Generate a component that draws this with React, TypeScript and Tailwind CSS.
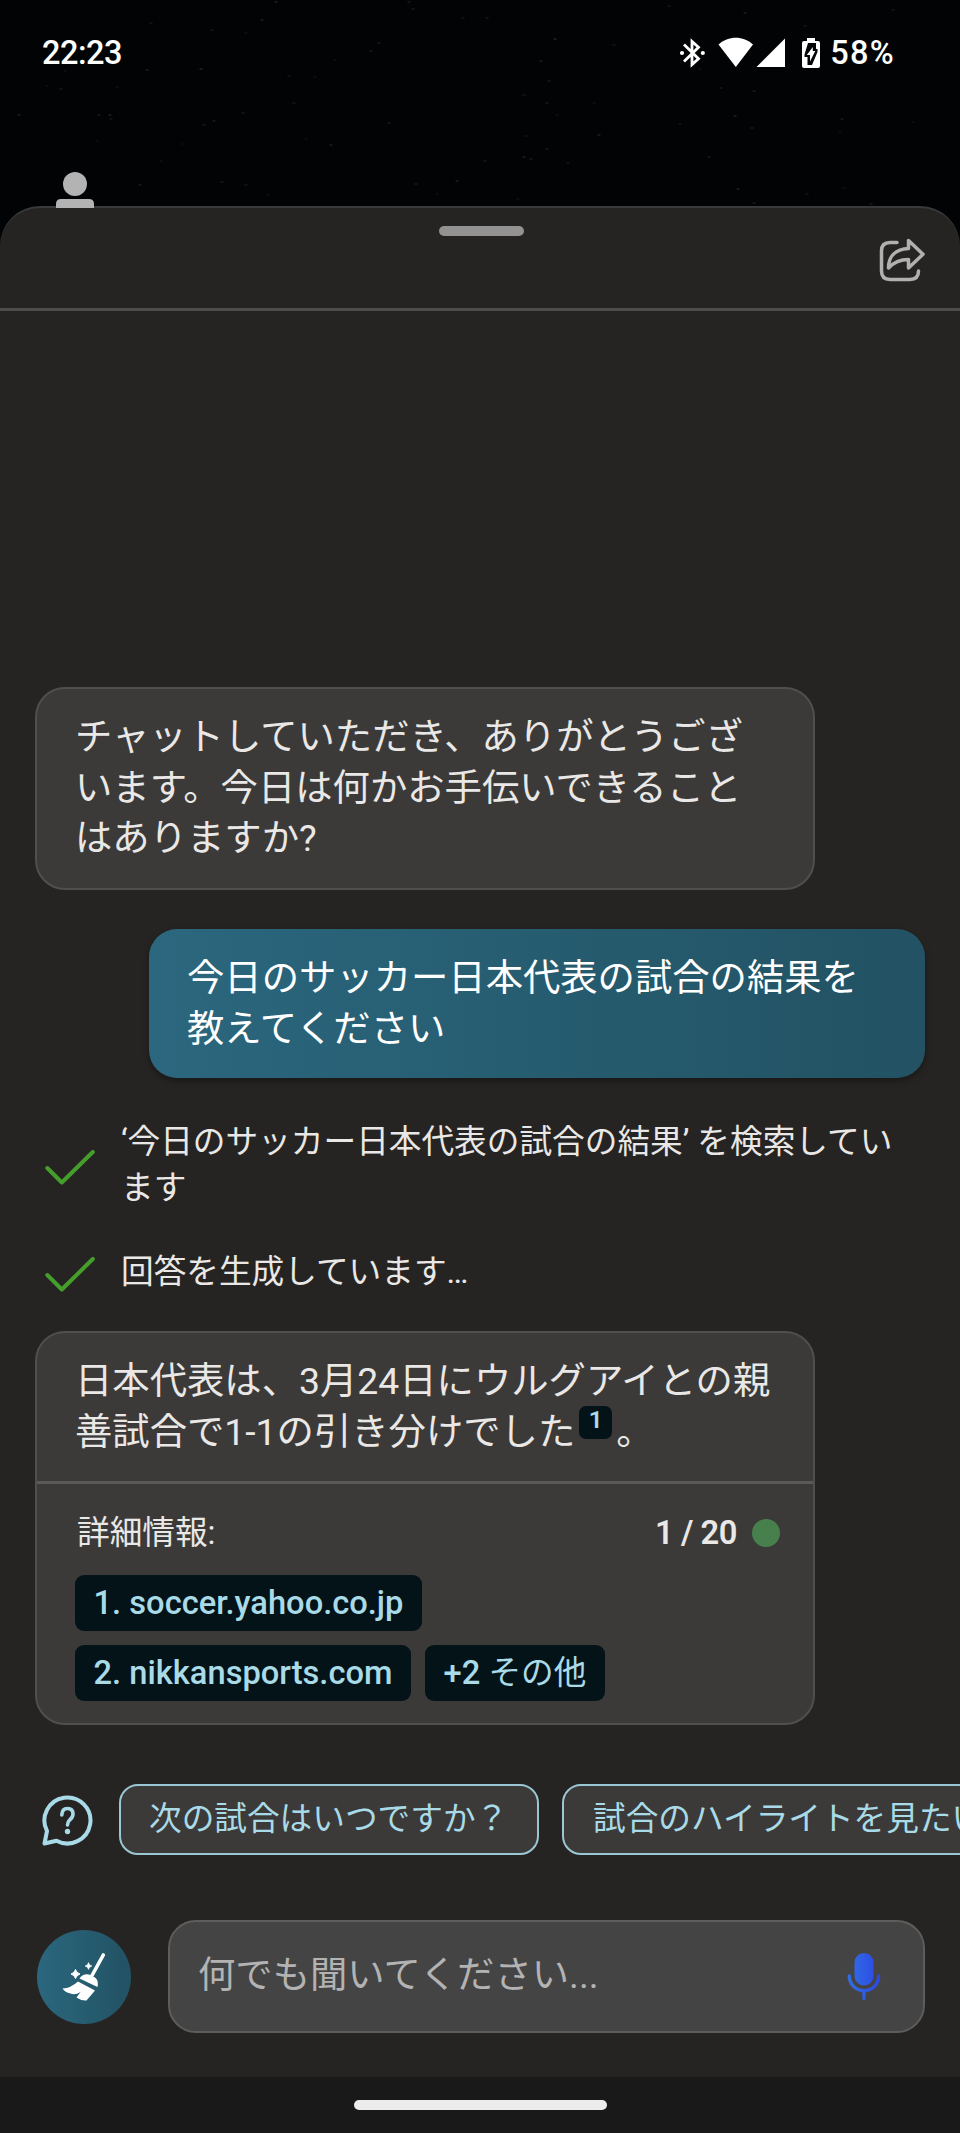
const FONT =
  "[font-family:Roboto,'Noto_Sans_CJK_JP',sans-serif]";

const STARS: [number, number, number][] = [
  [276, 2, 0.35], [151, 23, 0.25], [262, 20, 0.35], [212, 30, 0.25], [246, 33, 0.2], [409, 2, 0.3], [413, 9, 0.3],
  [463, 18, 0.25], [379, 43, 0.25], [371, 51, 0.25], [147, 70, 0.35], [201, 69, 0.4], [65, 71, 0.2], [289, 76, 0.25],
  [315, 77, 0.2], [335, 60, 0.2], [47, 86, 0.2], [61, 89, 0.25], [117, 87, 0.2], [294, 103, 0.25], [19, 115, 0.35],
  [99, 115, 0.3], [110, 115, 0.35], [111, 119, 0.25], [204, 125, 0.3], [214, 121, 0.3], [243, 113, 0.25], [389, 123, 0.3],
  [331, 145, 0.35], [306, 139, 0.2], [97, 141, 0.2], [161, 161, 0.2], [183, 144, 0.15], [222, 182, 0.3], [246, 185, 0.25],
  [140, 185, 0.3], [457, 181, 0.35], [416, 184, 0.25], [437, 194, 0.2], [268, 195, 0.2], [487, 18, 0.3], [555, 39, 0.4],
  [614, 45, 0.25], [541, 61, 0.35], [549, 81, 0.3], [524, 95, 0.25], [547, 103, 0.3], [594, 103, 0.2], [557, 115, 0.2],
  [599, 135, 0.35], [526, 136, 0.25], [680, 124, 0.25], [735, 116, 0.35], [752, 128, 0.25], [754, 91, 0.3], [842, 119, 0.3],
  [524, 157, 0.35], [531, 159, 0.3], [485, 161, 0.25], [547, 149, 0.25], [568, 163, 0.25], [709, 157, 0.3], [738, 189, 0.35],
  [807, 194, 0.25], [844, 188, 0.2], [871, 204, 0.3], [913, 122, 0.2], [669, 6, 0.25], [745, 13, 0.3], [893, 10, 0.25],
  [805, 26, 0.25], [700, 69, 0.2], [721, 88, 0.25], [840, 132, 0.2], [754, 203, 0.3], [518, 199, 0.2],
];

function Stars() {
  return (
    <svg className="absolute inset-0 h-[260px] w-[960px]" viewBox="0 0 960 260">
      {STARS.map(([x, y, o], i) => (
        <ellipse key={i} cx={x} cy={y} rx="1.8" ry="0.9" fill="#9aa" opacity={o * 0.4} />
      ))}
    </svg>
  );
}

function StatusBar() {
  return (
    <div className="relative flex h-[105px] items-center justify-between pr-[65px] pl-[42px] text-[32.500px] font-medium text-white">
      <span className="pt-[2px] tracking-[-0.500px]">22:23</span>
      <div className="flex h-[34px] items-center">
        <svg className="h-[34px] w-[28px]" viewBox="0 0 28 34" fill="none" stroke="#fff" strokeWidth="2.800">
          <path d="M5 8.500 19.500 22.700 13 28.500V5.500l6.500 5.800L5 25.500" strokeLinejoin="miter" />
          <circle cx="3" cy="17" r="2.100" fill="#fff" stroke="none" />
          <circle cx="23.800" cy="17" r="2.100" fill="#fff" stroke="none" />
        </svg>
        <svg className="ml-[11px] h-[34px] w-[68px]" viewBox="0 0 68 34" fill="#fff">
          <path d="M.5 8.500C10-.5 25.500-.5 35 8.500L17.800 31Z" />
          <path d="M67 2.500V31H38.500Z" />
        </svg>
        <svg className="ml-[16px] h-[34px] w-[18px]" viewBox="0 0 18 34">
          <path d="M5 2h8v3h3q2 0 2 2v23q0 2-2 2H2q-2 0-2-2V7q0-2 2-2h3Z" fill="#fff" />
          <path d="M6 7H14V13H15.500V16L10 29H5.500V21H2.500V18.500Z" fill="#030405" />
          <path d="M10.800 11 4.800 19H8V25.500L13.300 15H10.800Z" fill="#fff" />
        </svg>
        <span className="ml-[10px] pt-[2px] tracking-[1.300px]">58%</span>
      </div>
    </div>
  );
}

function Check() {
  return (
    <svg className="mt-[3px] mr-[26px] ml-[45px] h-[36px] w-[50px] shrink-0" viewBox="0 0 50 36" fill="none">
      <path d="M2.300 18 16.800 32.500 47.800 2" stroke="#459e2b" strokeWidth="4" strokeLinecap="round" strokeLinejoin="round" />
    </svg>
  );
}

function Chip({ children, className }: { children: React.ReactNode; className: string }) {
  return (
    <span
      className={`flex h-[56px] items-center justify-center rounded-[9px] bg-[#041317] text-[32.670px] font-medium whitespace-nowrap text-[#a9dae8] ${className}`}
    >
      {children}
    </span>
  );
}

export default function App() {
  return (
    <div className={`relative flex h-[2133px] w-[960px] flex-col overflow-hidden bg-[#020304] ${FONT}`}>
      <Stars />
      <StatusBar />

      <div className="relative z-10 flex h-[101px] items-end pl-[56px]">
        <svg className="-mb-[2px] h-[40px] w-[38px]" viewBox="0 0 38 40" fill="#b3b3b3">
          <circle cx="19" cy="16" r="12" />
          <path d="M0 40V36q0-5 5-5h28q5 0 5 5v4Z" />
        </svg>
      </div>

      <div className="relative flex flex-1 flex-col rounded-t-[40px] border-t-2 border-[#37393a] bg-[#252422]">
        <header className="relative h-[103px] border-b-[3px] border-[#4e4d4b]">
          <div className="absolute top-[18px] left-[439px] h-[10px] w-[85px] rounded-full bg-[#929292]" />
          <svg
            className="absolute top-[30px] left-[879px] h-[44px] w-[46px]"
            viewBox="0 0 46 44"
            fill="none"
            stroke="#b0b0b0"
            strokeWidth="3.500"
            strokeLinecap="round"
            strokeLinejoin="round"
          >
            <path d="M18 4.500H11Q2.500 4.500 2.500 13V33Q2.500 41.500 11 41.500H31Q39.500 41.500 39.500 33" />
            <path d="M29.500 2.500V10.500C17 11 9.500 18 9.500 30C15 24 21 21.500 29.500 21.500V30L44 16.300Z" />
          </svg>
        </header>

        <main className="flex flex-col">
          <div className="mt-[376px] ml-[35px] h-[203px] w-[780px] rounded-[30px] border-2 border-[#504f4d] bg-[#3b3a38] pt-[23px] pl-[38px] text-[37.330px] leading-[50.670px] text-[#eae8e6]">
            チャットしていただき、ありがとうござ
            <br />
            います。今日は何かお手伝いできること
            <br />
            はありますか?
          </div>

          <div className="mt-[39px] ml-[149px] h-[149px] w-[776px] rounded-[28px] bg-linear-to-r from-[#2b677e] to-[#225263] pt-[24px] pl-[38px] text-[37.330px] leading-[50.670px] text-white shadow-[0_3px_6px_rgba(0,0,0,0.35)]">
            今日のサッカー日本代表の試合の結果を
            <br />
            教えてください
          </div>

          <div className="mt-[40px] flex h-[96px] items-center text-[32.670px] leading-[45.700px] text-[#eae8e6]">
            <Check />
            <p className="whitespace-nowrap">
              ‘今日のサッカー日本代表の試合の結果’ を検索してい
              <br />
              ます
            </p>
          </div>
          <div className="mt-[34px] flex h-[50px] items-center text-[32.670px] leading-[45.700px] text-[#eae8e6]">
            <Check />
            <p>回答を生成しています…</p>
          </div>

          <section className="mt-[33px] ml-[35px] h-[394px] w-[780px] rounded-[30px] border-2 border-[#504f4d] bg-[#3b3a38] text-[#eae8e6]">
            <div className="h-[151px] border-b-[3px] border-[#5a5957] pt-[23px] pl-[38px] text-[37.330px] leading-[50.600px] whitespace-nowrap">
              日本代表は、3月24日にウルグアイとの親
              <div className="flex">
                <span>善試合で1-1の引き分けでした</span>
                <span className="-mt-[1px] ml-[4px] flex h-[33px] w-[33px] items-center justify-center rounded-[7px] bg-[#041317] pb-[3px] text-[24.500px] leading-none font-semibold text-[#a9dae8]">
                  1
                </span>
                <span className="ml-[4px]">。</span>
              </div>
            </div>
            <div className="flex h-[91px] items-center pt-[7px] pr-[33px] pl-[40px] text-[32.670px]">
              <span>詳細情報:</span>
              <span className="ml-auto font-semibold tracking-[-0.450px]">1 / 20</span>
              <span className="ml-[15px] h-[28px] w-[28px] rounded-full bg-[#47804d]" />
            </div>
            <div className="flex pl-[38px]">
              <Chip className="w-[347px]">1. soccer.yahoo.co.jp</Chip>
            </div>
            <div className="mt-[14px] flex gap-[14px] pl-[38px]">
              <Chip className="w-[336px]">2. nikkansports.com</Chip>
              <Chip className="w-[180px]">
                +2&nbsp;<span className="font-normal">その他</span>
              </Chip>
            </div>
          </section>

          <div className="mt-[59px] flex h-[71px] items-center overflow-hidden text-[32.670px] whitespace-nowrap text-[#a9dae8]">
            <svg className="ml-[42px] h-[52px] w-[51px] shrink-0" viewBox="0 0 51 52" fill="none" stroke="#a9dae8" strokeWidth="4" strokeLinecap="round" strokeLinejoin="round">
              <path d="M5 37A23 23 0 1 1 14.500 46.700L2.500 49.500Z" />
              <path d="M19.800 21Q20 14.500 25.500 14.500Q31 14.500 31 20Q31 23 28 25.700Q25.500 28 25.500 31" strokeWidth="3.600" />
              <circle cx="25.500" cy="37.500" r="2.700" fill="#a9dae8" stroke="none" />
            </svg>
            <div className="ml-[26px] flex h-[71px] w-[420px] shrink-0 items-center rounded-[19px] border-2 border-[#9ac7d3] bg-[#3b3a38] pl-[28px]">
              次の試合はいつですか？
            </div>
            <div className="ml-[23px] flex h-[71px] w-[460px] shrink-0 items-center rounded-[19px] border-2 border-[#9ac7d3] bg-[#3b3a38] pl-[29px]">
              試合のハイライトを見たい
            </div>
          </div>
        </main>

        <div className="mt-[65px] flex items-center">
          <div className="ml-[37px] flex h-[94px] w-[94px] items-center justify-center rounded-full bg-linear-to-r from-[#2b677e] to-[#225263]">
            <svg className="h-[94px] w-[94px]" viewBox="0 0 94 94" fill="#fff">
              <path d="M66.300 25 55 45.500" stroke="#fff" strokeWidth="3.600" strokeLinecap="round" />
              <path d="M42.500 48.500Q46 43.500 52 44.500L58 47.500Q62 50.500 60.500 57Z" />
              <path d="M41 51.500 58 60.500 49.500 70.500Q44.500 71 39.500 67.500L43.500 62Q38 65.500 33.500 63.500Q28 62.500 25.500 58.500Q34 58 41 51.500Z" />
              <path d="M38.500 39.500Q39.500 43 43 44Q39.500 45 38.500 48.500Q37.500 45 34 44Q37.500 43 38.500 39.500Z" stroke="#fff" />
              <path d="M51.500 32.500Q52 35.300 55 36Q52 36.700 51.500 39.500Q51 36.700 48 36Q51 35.300 51.500 32.500Z" stroke="#fff" strokeWidth="0.500" />
            </svg>
          </div>
          <div className="ml-[37px] flex h-[113px] w-[757px] items-center rounded-[28px] border-2 border-[#5d5d5b] bg-[#444444] pl-[28px] text-[37.330px] text-[#b3b3b3]">
            <span className="pb-[2px]">何でも聞いてください...</span>
            <svg className="mr-[42px] ml-auto h-[48px] w-[34px]" viewBox="0 0 34 48" fill="none">
              <defs>
                <linearGradient id="mic" x1="0" y1="0" x2="34" y2="0" gradientUnits="userSpaceOnUse">
                  <stop stopColor="#3270e4" />
                  <stop offset="1" stopColor="#2c46e4" />
                </linearGradient>
              </defs>
              <rect x="7.500" y="0" width="19" height="32.500" rx="9.500" fill="url(#mic)" />
              <path d="M2.300 23A14.700 14.700 0 0 0 31.700 23M17 38V45.500" stroke="url(#mic)" strokeWidth="3.400" strokeLinecap="round" />
            </svg>
          </div>
        </div>

        <div className="mt-auto flex h-[56px] justify-center bg-[#191919] pt-[23px]">
          <div className="h-[10px] w-[253px] rounded-full bg-[#ececec]" />
        </div>
      </div>
    </div>
  );
}
